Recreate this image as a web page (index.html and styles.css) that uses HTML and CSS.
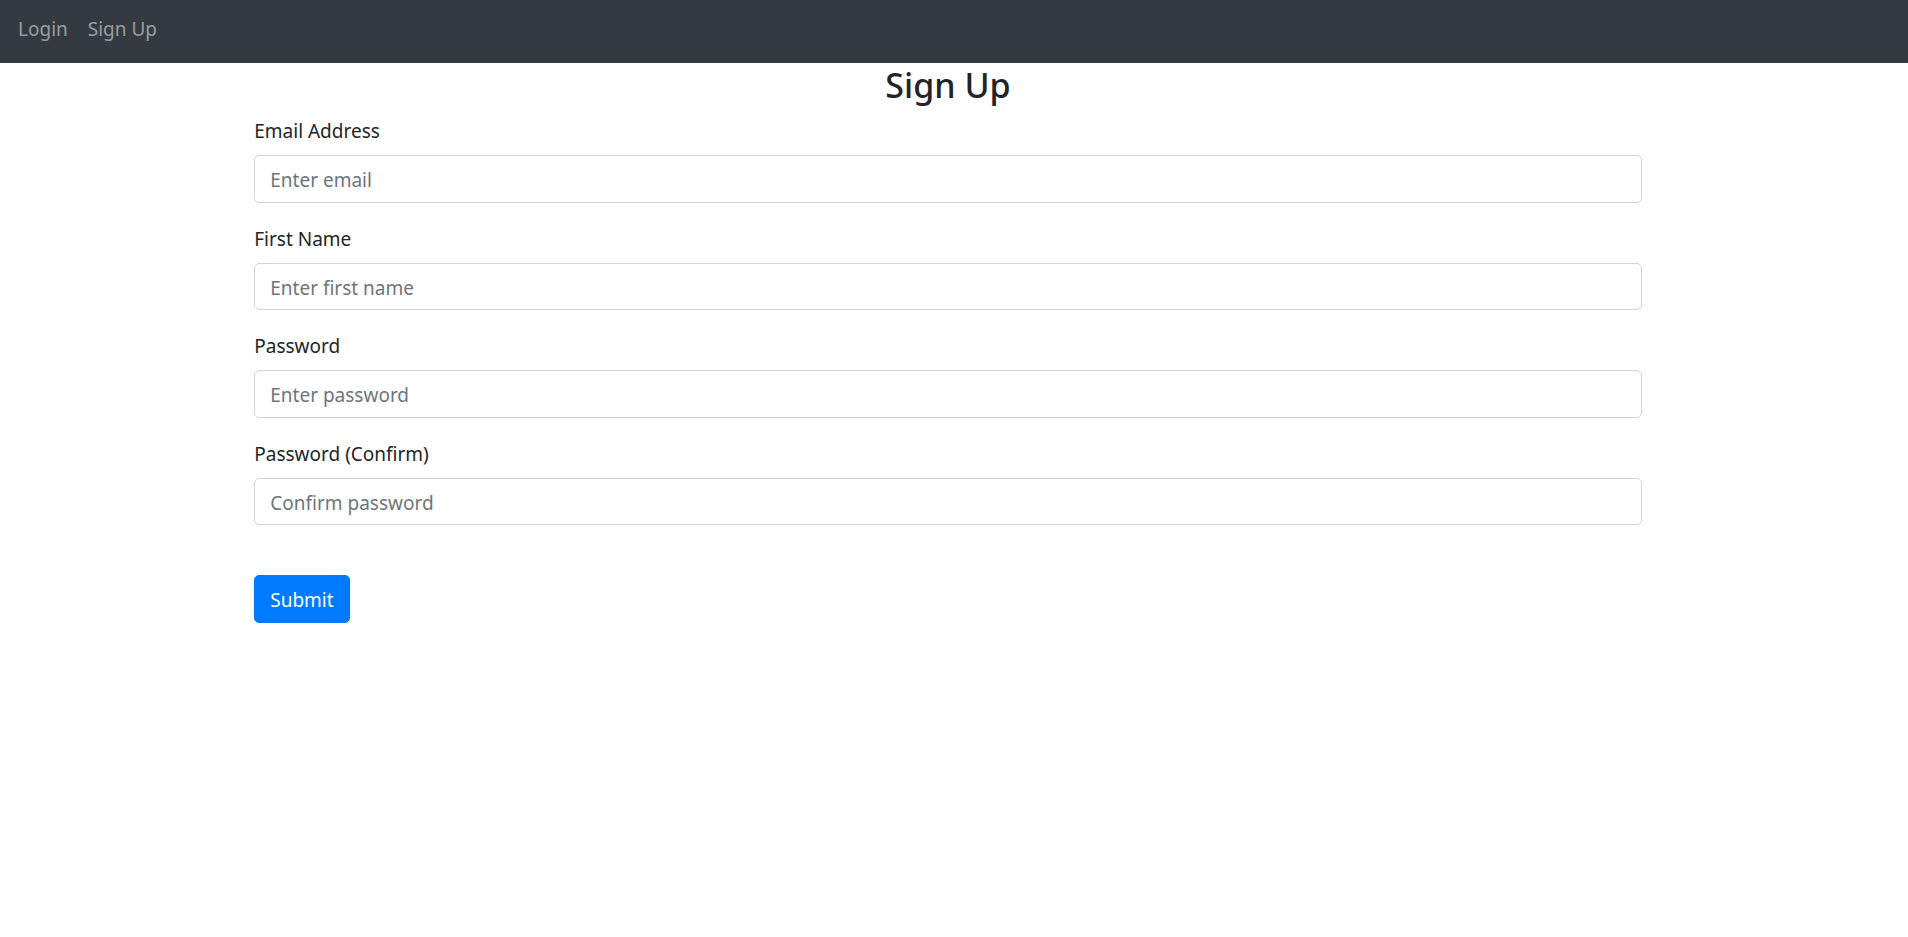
FILE: index.html
```html
<!DOCTYPE html>
<html>
<head>
<meta charset="utf-8">
<link rel="stylesheet" href="styles.css">
<title>Sign Up</title>
</head>
<body>
<nav class="navbar">
  <a class="nav-link" href="#">Login</a>
  <a class="nav-link" href="#">Sign Up</a>
</nav>
<div class="page">
  <form class="container">
    <h3 class="title">Sign Up</h3>
    <div class="form-group">
      <label class="label">Email Address</label>
      <input class="input" type="email" placeholder="Enter email">
    </div>
    <div class="form-group">
      <label class="label">First Name</label>
      <input class="input" type="text" placeholder="Enter first name">
    </div>
    <div class="form-group">
      <label class="label">Password</label>
      <input class="input" type="password" placeholder="Enter password">
    </div>
    <div class="form-group">
      <label class="label">Password (Confirm)</label>
      <input class="input" type="password" placeholder="Confirm password">
    </div>
    <div class="actions">
      <button class="btn" type="button">Submit</button>
    </div>
  </form>
</div>
</body>
</html>
```
FILE: styles.css
```css
html, body {
  margin: 0;
  padding: 0;
  background: #fff;
}
body {
  font-family: "Noto Sans", "Open Sans", sans-serif;
  font-size: 19px;
  line-height: 30px;
  color: #212529;
}
.navbar {
  height: 63px;
  background: #343a40;
  display: flex;
  align-items: center;
  gap: 20px;
  padding: 0 18px;
  box-sizing: border-box;
}
.nav-link {
  color: rgba(255, 255, 255, 0.5);
  text-decoration: none;
  font-size: 19px;
  line-height: 30px;
  margin-top: -5px;
}
.page {
  padding-right: 12px;
}
.container {
  width: 1387.5px;
  margin: 0 auto;
  display: flex;
  flex-direction: column;
}
.title {
  margin: 0 0 10px 0;
  padding-top: 1px;
  height: 41px;
  font-size: 34px;
  line-height: 42px;
  font-weight: 500;
  text-align: center;
}
.form-group {
  display: flex;
  flex-direction: column;
  margin-bottom: 20px;
}
.label {
  display: block;
  margin-bottom: 10px;
  padding-top: 1px;
  height: 29px;
  line-height: 30px;
}
.input {
  display: block;
  box-sizing: border-box;
  width: 100%;
  height: 47.5px;
  padding: 9px 15px 6px;
  font-family: inherit;
  font-size: 19px;
  line-height: 30px;
  color: #495057;
  background: #fff;
  border: 1.25px solid #ced4da;
  border-radius: 5px;
  outline: none;
}
.input::placeholder {
  color: #6c757d;
  opacity: 1;
}
.actions {
  margin-top: 30px;
}
.btn {
  box-sizing: border-box;
  height: 47.5px;
  padding: 9px 15px 6px;
  font-family: inherit;
  font-size: 19px;
  line-height: 30px;
  color: #fff;
  background: #007bff;
  border: 1.25px solid #007bff;
  border-radius: 5px;
  cursor: pointer;
}
```
